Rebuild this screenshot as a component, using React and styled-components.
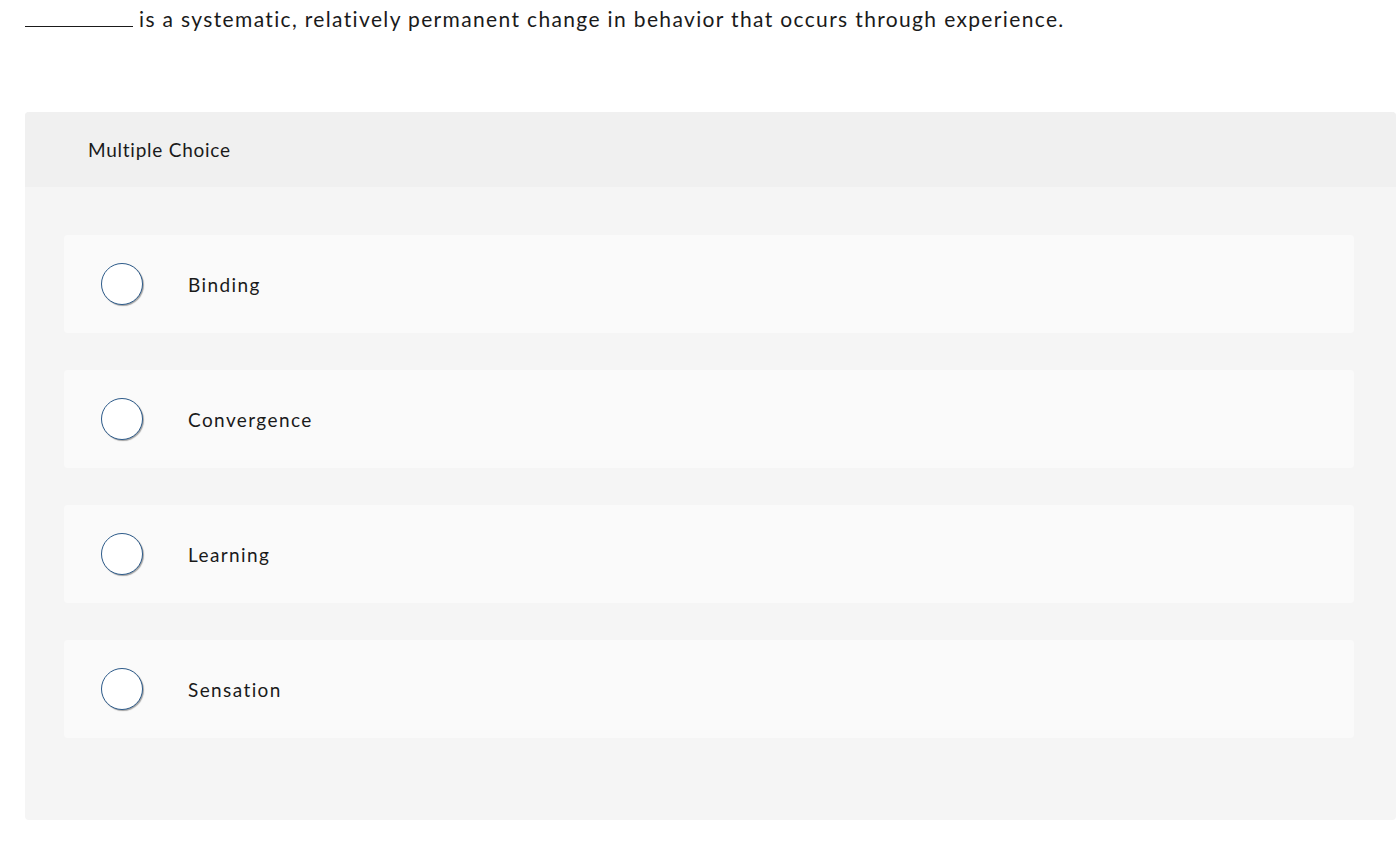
import React from "react";
import styled, { createGlobalStyle } from "styled-components";

const GlobalStyle = createGlobalStyle`
  html, body {
    margin: 0;
    padding: 0;
    background: #fff;
  }
  body {
    font-family: "Lato", "Open Sans", sans-serif;
    color: #1a1a1a;
  }
`;

const Page = styled.div`
  padding: 3px 3px 24px 25px;
`;

const Prompt = styled.p`
  margin: 0;
  font-size: 21px;
  line-height: 32px;
  letter-spacing: 1.35px;
  color: #1a1a1a;
`;

const Blank = styled.span`
  display: inline-block;
  width: 108px;
  height: 20px;
  border-bottom: 1.5px solid #1a1a1a;
  margin-right: 6px;
  vertical-align: baseline;
`;

const Panel = styled.section`
  margin-top: 77px;
  background: #f5f5f5;
  border-radius: 4px;
  overflow: hidden;
`;

const PanelHeader = styled.header`
  background: #f0f0f0;
  height: 75px;
  display: flex;
  align-items: center;
  padding-left: 63px;
  font-size: 19px;
  letter-spacing: 0.75px;
  color: #1a1a1a;
`;

const Choices = styled.div`
  display: flex;
  flex-direction: column;
  gap: 37px;
  padding: 48px 42px 82px 39px;
`;

const Choice = styled.label`
  display: flex;
  align-items: center;
  height: 98px;
  background: #fafafa;
  border-radius: 4px;
  padding-left: 37px;
  cursor: pointer;
`;

const Radio = styled.span`
  box-sizing: border-box;
  width: 42px;
  height: 42px;
  border-radius: 50%;
  background: #fff;
  border: 1.5px solid #2d5b8a;
  box-shadow: 1px 1px 1px rgba(0, 0, 0, 0.35);
  flex-shrink: 0;
`;

const ChoiceText = styled.span`
  margin-left: 45px;
  font-size: 19px;
  letter-spacing: 1.4px;
  color: #1a1a1a;
`;

const choices = ["Binding", "Convergence", "Learning", "Sensation"];

export default function App() {
  return (
    <>
      <GlobalStyle />
      <Page>
        <Prompt>
          <Blank />
          is a systematic, relatively permanent change in behavior that occurs
          through experience.
        </Prompt>
        <Panel>
          <PanelHeader>Multiple Choice</PanelHeader>
          <Choices>
            {choices.map((c) => (
              <Choice key={c}>
                <Radio />
                <ChoiceText>{c}</ChoiceText>
              </Choice>
            ))}
          </Choices>
        </Panel>
      </Page>
    </>
  );
}
